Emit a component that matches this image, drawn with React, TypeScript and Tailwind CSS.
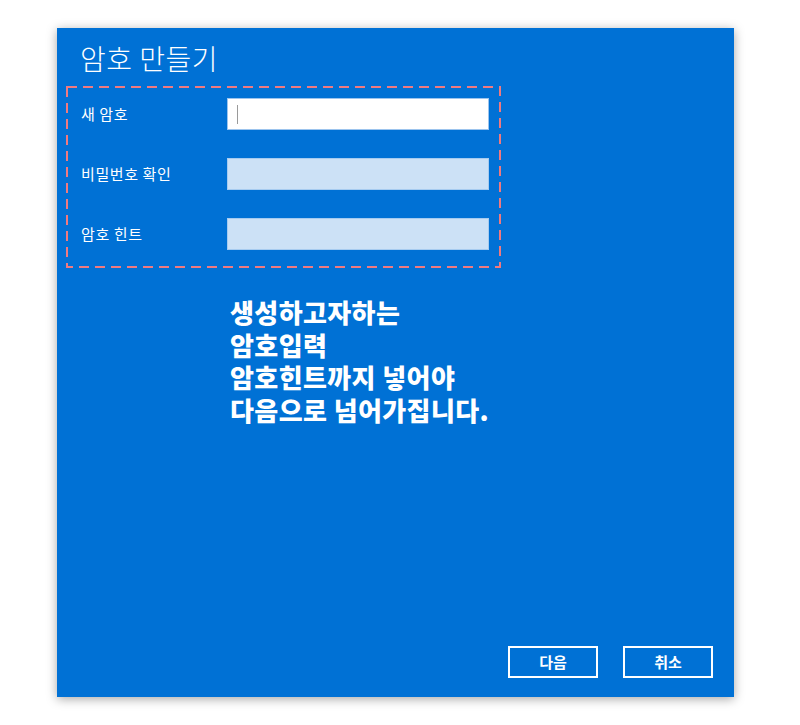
// "암호 만들기" dialog from the Windows setup flow, with an annotation box
// around the password fields and a bold hint text below.

const KR = { fontFamily: '"Noto Sans CJK KR", "Noto Sans", sans-serif' };

const fields = [
  { label: "새 암호", active: true },
  { label: "비밀번호 확인", active: false },
  { label: "암호 힌트", active: false },
];

const hint = ["생성하고자하는", "암호입력", "암호힌트까지 넣어야", "다음으로 넘어가집니다."];

function DashedFrame() {
  return (
    <svg
      className="absolute inset-0 pointer-events-none"
      width="435"
      height="182"
      viewBox="0 0 435 182"
    >
      <rect
        x="1"
        y="1"
        width="433"
        height="180"
        fill="none"
        stroke="#ef7a80"
        strokeWidth="2"
        strokeDasharray="10 6"
      />
    </svg>
  );
}

export default function App() {
  return (
    <div className="min-h-[725px] w-[800px] bg-white pt-[28px] pl-[57px]" style={KR}>
      <div className="flex h-[669px] w-[677px] flex-col bg-[#0071d5] pt-[10px] pl-[9px] pr-[21px] pb-[19px] shadow-[0_2px_10px_rgba(0,0,0,0.35)]">
        <h1 className="pl-[14px] text-[28px] font-light leading-[40px] tracking-[0.5px] text-white">
          암호 만들기
        </h1>

        <div className="relative mt-[8px] flex h-[182px] w-[435px] flex-col gap-[28px] pt-[12px] pl-[15px]">
          <DashedFrame />
          {fields.map((f) => (
            <div key={f.label} className="flex h-[32px] items-center">
              <span className="w-[146px] text-[15px] tracking-[0.6px] text-white">
                {f.label}
              </span>
              <div
                className={`relative h-[32px] w-[262px] border ${
                  f.active
                    ? "border-[#9cc4ee] bg-white"
                    : "border-[#a6cbf0] bg-[#cce1f6]"
                }`}
              >
                {f.active && (
                  <span className="absolute left-[9px] top-[6px] h-[19px] w-px bg-[#9a9a9a]" />
                )}
              </div>
            </div>
          ))}
        </div>

        <div className="mt-[28px] pl-[164px] text-[26px] font-black leading-[32.5px] tracking-[0.4px] text-white">
          {hint.map((line) => (
            <p key={line}>{line}</p>
          ))}
        </div>

        <div className="mt-auto flex justify-end gap-[25px]">
          <button className="h-[32px] w-[90px] border-2 border-white text-[15px] font-bold text-white">
            다음
          </button>
          <button className="h-[32px] w-[90px] border-2 border-white text-[15px] font-bold text-white">
            취소
          </button>
        </div>
      </div>
    </div>
  );
}
